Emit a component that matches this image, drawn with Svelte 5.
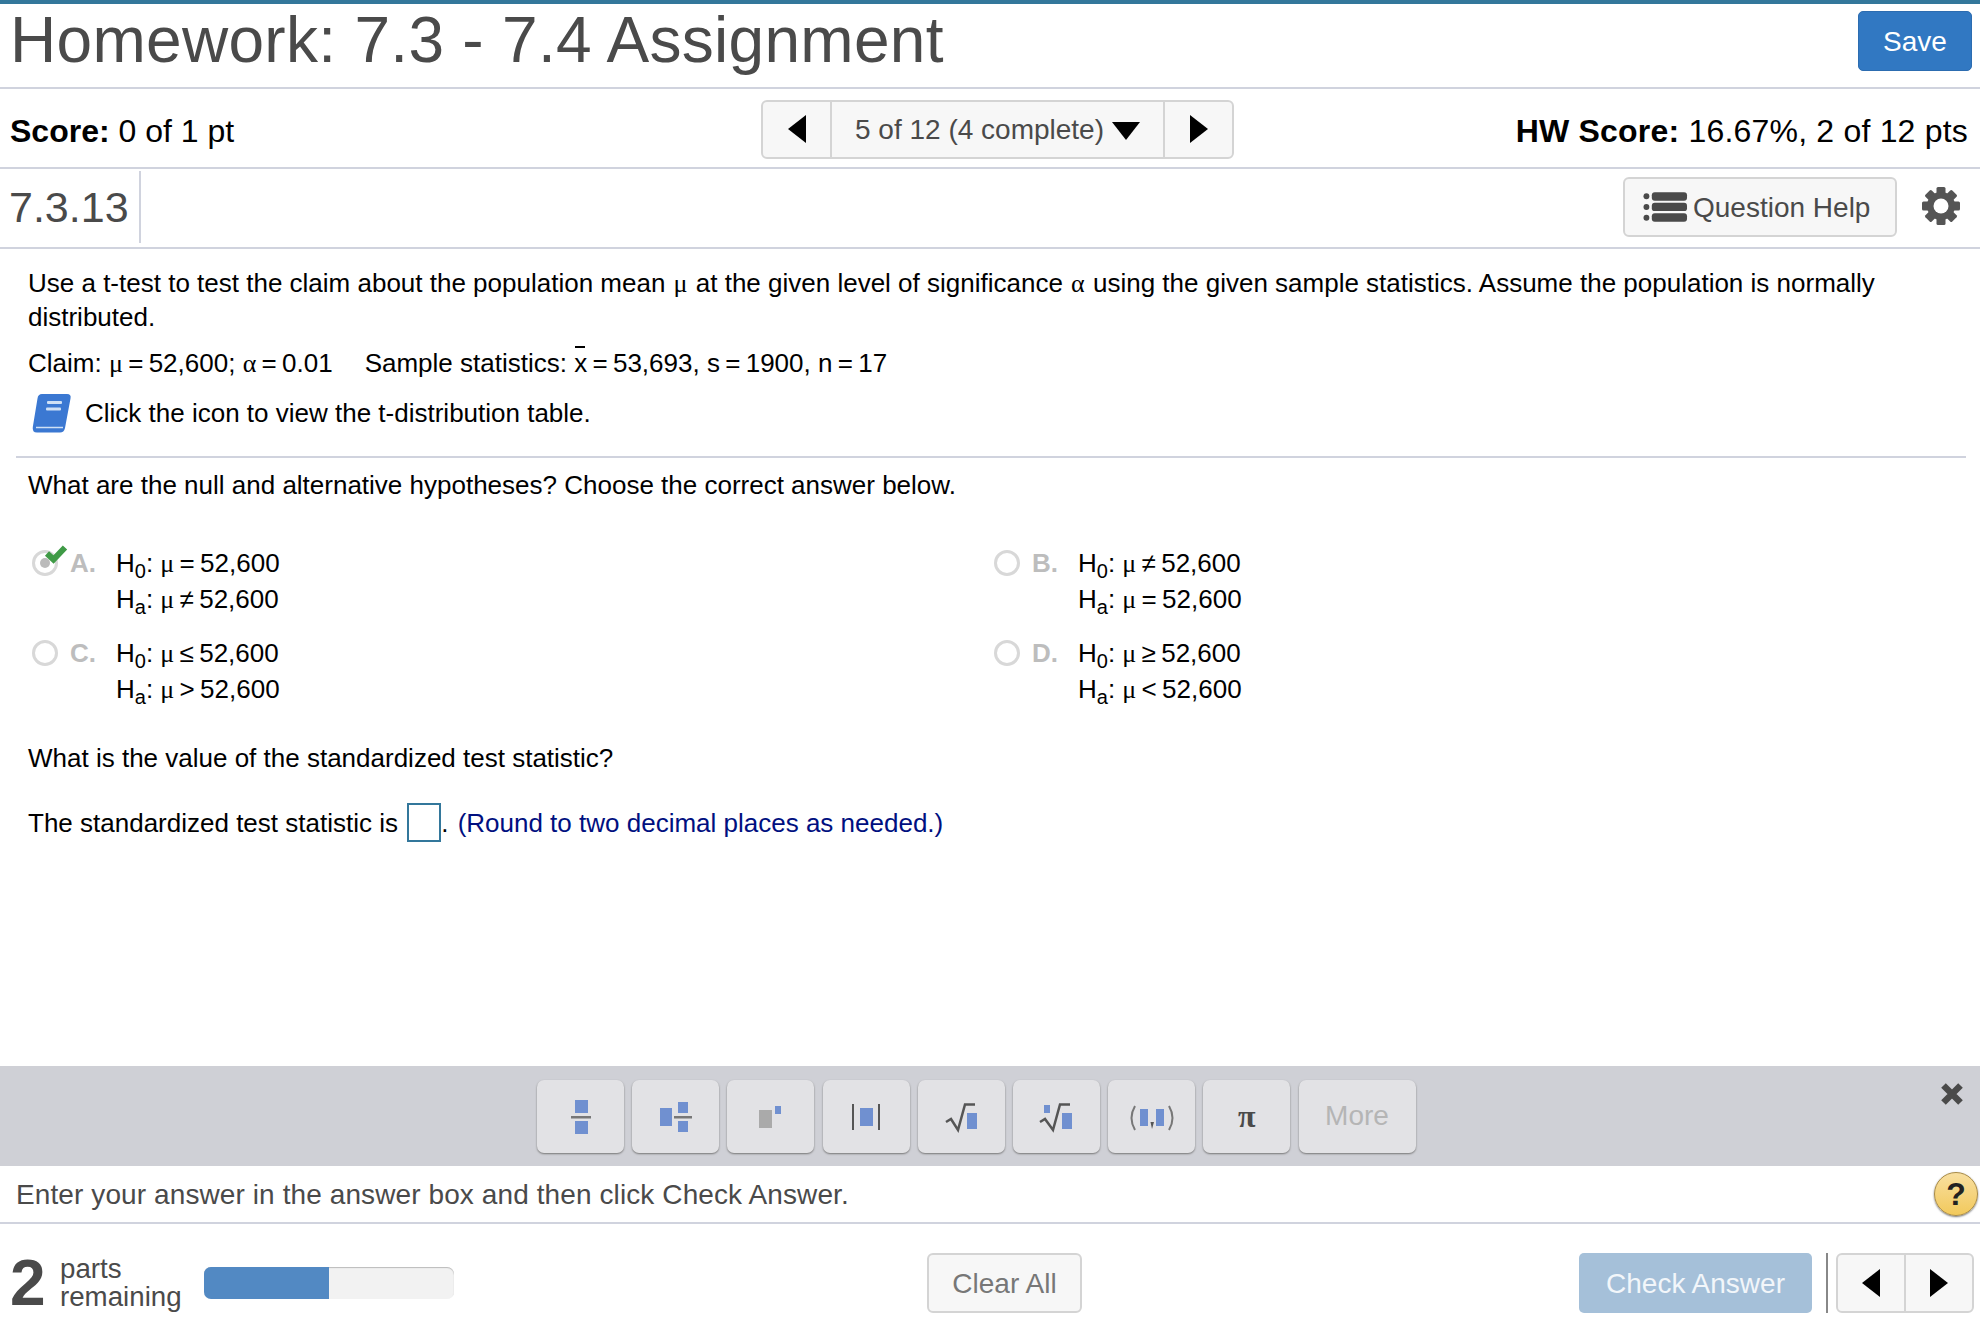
<script>
  const options = [
    { key: 'A', h0: '=', ha: '≠', checked: true },
    { key: 'B', h0: '≠', ha: '=' },
    { key: 'C', h0: '≤', ha: '>' },
    { key: 'D', h0: '≥', ha: '<' },
  ];
  const progress = 50;
</script>

<div class="page">
  <header class="title-row">
    <h1>Homework: 7.3 - 7.4 Assignment</h1>
    <button class="save">Save</button>
  </header>

  <div class="score-row">
    <div class="score"><b>Score:</b> 0 of 1 pt</div>
    <div class="pager">
      <span class="pager-arrow"><i class="tri left"></i></span>
      <span class="pager-label">5 of 12 (4 complete) <i class="tri down"></i></span>
      <span class="pager-arrow"><i class="tri right"></i></span>
    </div>
    <div class="score"><b>HW Score:</b> 16.67%, 2 of 12 pts</div>
  </div>

  <div class="question-row">
    <div class="question-id">7.3.13</div>
    <button class="help-btn">
      <svg width="45" height="32" viewBox="0 0 46 32">
        <g fill="#4a4a4a">
          <circle cx="3.5" cy="5" r="3" />
          <circle cx="3.5" cy="16" r="3" />
          <circle cx="3.5" cy="27" r="3" />
          <rect x="9" y="1" width="36" height="8.5" rx="3" />
          <rect x="9" y="11.7" width="36" height="8.5" rx="3" />
          <rect x="9" y="22.5" width="36" height="8.5" rx="3" />
        </g>
      </svg>
      <span class="help-label">Question Help</span>
    </button>
    <svg class="gear" width="40" height="40" viewBox="0 0 40 40">
      <g fill="#555">
        <rect x="15.5" y="1" width="9" height="38" rx="1.5" />
        <rect x="15.5" y="1" width="9" height="38" rx="1.5" transform="rotate(45 20 20)" />
        <rect x="15.5" y="1" width="9" height="38" rx="1.5" transform="rotate(90 20 20)" />
        <rect x="15.5" y="1" width="9" height="38" rx="1.5" transform="rotate(135 20 20)" />
      </g>
      <circle cx="20" cy="20" r="14" fill="#555" />
      <circle cx="20" cy="20" r="7.5" fill="#fff" />
    </svg>
  </div>

  <main class="content">
    <p class="line intro">
      Use a t-test to test the claim about the population mean <span class="gr">μ</span> at the given level of significance <span class="gr">α</span> using the given sample statistics. Assume the population is normally distributed.
    </p>
    <p class="line claim">
      Claim: <span class="gr">μ</span><span class="op">=</span>52,600; <span class="gr">α</span><span class="op">=</span>0.01<span class="tab"></span>Sample statistics: <span class="xbar">x</span><span class="op">=</span>53,693, s<span class="op">=</span>1900, n<span class="op">=</span>17
    </p>
    <div class="line book-row">
      <svg width="40" height="40" viewBox="0 0 40 40">
        <path d="M10 1H35Q39.500 1 38.500 5.500L33 35Q32 39.500 28 39.500H5Q0 39.500 .8 34L5.500 5.500Q6 1 10 1Z" fill="#3b78d2" />
        <path d="M4 34.500H31" stroke="#cfe0f5" stroke-width="1.500" />
        <rect x="15" y="8" width="15" height="3" rx="1" fill="#cfe0f5" />
        <rect x="14" y="14.500" width="15" height="3" rx="1" fill="#cfe0f5" />
      </svg>
      <span>Click the icon to view the t-distribution table.</span>
    </div>
    <hr />
    <p class="line">What are the null and alternative hypotheses? Choose the correct answer below.</p>

    <div class="options">
      {#each options as opt}
        <div class="option">
          <span class="radio" class:on={opt.checked}>
            {#if opt.checked}
              <svg class="check" width="24" height="20" viewBox="0 0 24 20">
                <path d="M3 9.500L9.500 15.500L21 3.500" fill="none" stroke="#3f9a46" stroke-width="6" />
              </svg>
            {/if}
          </span>
          <span class="opt-key">{opt.key}.</span>
          <div class="hyp">
            <div>H<sub>0</sub>: <span class="gr">μ</span><span class="op">{opt.h0}</span>52,600</div>
            <div>H<sub>a</sub>: <span class="gr">μ</span><span class="op">{opt.ha}</span>52,600</div>
          </div>
        </div>
      {/each}
    </div>

    <p class="line ask">What is the value of the standardized test statistic?</p>
    <p class="line answer">
      The standardized test statistic is <span class="answer-box"></span>. <span class="note">(Round to two decimal places as needed.)</span>
    </p>
  </main>

  <div class="toolbar">
    <button class="tool">
      <svg width="87" height="73" viewBox="0 0 87 73">
        <rect class="b" x="38" y="20" width="13" height="13" />
        <rect class="g" x="34" y="36" width="20" height="2.500" />
        <rect class="b" x="38" y="41" width="13" height="13" />
      </svg>
    </button>
    <button class="tool">
      <svg width="87" height="73" viewBox="0 0 87 73">
        <rect class="b" x="28" y="28" width="12" height="18" />
        <rect class="b" x="46" y="22" width="10" height="11" />
        <rect class="g" x="42" y="36" width="18" height="2.500" />
        <rect class="b" x="46" y="41" width="10" height="11" />
      </svg>
    </button>
    <button class="tool">
      <svg width="87" height="73" viewBox="0 0 87 73">
        <rect x="32" y="30" width="13" height="18" fill="#aaa" />
        <rect class="b" x="48" y="26" width="6" height="8" />
      </svg>
    </button>
    <button class="tool">
      <svg width="87" height="73" viewBox="0 0 87 73">
        <rect class="d" x="29" y="24" width="2" height="26" />
        <rect class="b" x="37" y="28" width="13" height="18" />
        <rect class="d" x="55" y="24" width="2" height="26" />
      </svg>
    </button>
    <button class="tool">
      <svg width="87" height="73" viewBox="0 0 87 73">
        <path class="rad" d="M28 42L33 39L40 50L47 24.500H57" />
        <rect class="b" x="49" y="33" width="10" height="16" />
      </svg>
    </button>
    <button class="tool">
      <svg width="87" height="73" viewBox="0 0 87 73">
        <rect class="b" x="31" y="25" width="6" height="8" />
        <path class="rad" d="M27 42L32 39L40 50L47 24.500H57" />
        <rect class="b" x="49" y="33" width="10" height="16" />
      </svg>
    </button>
    <button class="tool">
      <svg width="87" height="73" viewBox="0 0 87 73">
        <path d="M27 26Q20 38 27 50M61 26Q68 38 61 50" fill="none" stroke="#777" stroke-width="2" />
        <rect class="b" x="32" y="29" width="8" height="17" />
        <path d="M42.500 42H46L44 49Z" fill="#555" />
        <rect class="b" x="48" y="29" width="8" height="17" />
      </svg>
    </button>
    <button class="tool pi">π</button>
    <button class="tool more">More</button>
    <svg class="close" width="24" height="24" viewBox="0 0 24 24">
      <path d="M3.500 3.500L20.500 20.500M20.500 3.500L3.500 20.500" stroke="#4a4a4a" stroke-width="6.500" />
    </svg>
  </div>

  <div class="hint">
    <span class="hint-text">Enter your answer in the answer box and then click Check Answer.</span>
    <span class="hint-help">?</span>
  </div>

  <footer class="footer">
    <div class="parts">
      <span class="parts-num">2</span>
      <span class="parts-text">parts<br />remaining</span>
      <div class="bar"><div class="bar-fill" style="width:{progress}%"></div></div>
    </div>
    <button class="clear">Clear All</button>
    <div class="actions">
      <button class="check-answer">Check Answer</button>
      <span class="sep"></span>
      <div class="mini-nav">
        <span><i class="tri left"></i></span>
        <span><i class="tri right"></i></span>
      </div>
    </div>
  </footer>
</div>

<style>
  :global(body) {
    margin: 0;
    background: #fff;
  }
  .page {
    width: 1980px;
    height: 1328px;
    display: flex;
    flex-direction: column;
    box-sizing: border-box;
    border-top: 4px solid #33779b;
    font-family: 'Liberation Sans', Arial, sans-serif;
    color: #000;
    overflow: hidden;
  }
  button {
    font-family: inherit;
    margin: 0;
    padding: 0;
  }

  .title-row {
    height: 85px;
    flex: none;
    display: flex;
    justify-content: space-between;
    align-items: flex-start;
    padding: 3px 8px 0 10px;
    box-sizing: border-box;
    border-bottom: 2px solid #d0d3de;
  }
  h1 {
    margin: 0;
    font-size: 64px;
    font-weight: 400;
    line-height: 66px;
    letter-spacing: 0.3px;
    color: #4a4a4a;
  }
  .save {
    width: 114px;
    height: 60px;
    margin-top: 4px;
    padding-top: 2px;
    background: #3178c2;
    border: 1px solid #2c6cb0;
    border-radius: 5px;
    color: #fff;
    font-size: 28px;
  }

  .score-row {
    height: 80px;
    flex: none;
    display: grid;
    grid-template-columns: 751px 473px 1fr;
    align-items: center;
    padding: 0 12px 0 10px;
    box-sizing: border-box;
    border-bottom: 2px solid #d0d3de;
  }
  .score {
    font-size: 32px;
    padding-top: 6px;
  }
  .score:last-child {
    text-align: right;
    letter-spacing: 0.2px;
  }
  .pager {
    height: 59px;
    display: flex;
    box-sizing: border-box;
    border: 2px solid #d4d4d4;
    border-radius: 6px;
    background: #f7f7f7;
    margin-top: 2px;
  }
  .pager-arrow {
    width: 67px;
    display: flex;
    align-items: center;
    justify-content: center;
  }
  .pager-label {
    flex: 1;
    border-left: 2px solid #d4d4d4;
    border-right: 2px solid #d4d4d4;
    display: flex;
    align-items: center;
    padding: 2px 0 0 23px;
    gap: 8px;
    font-size: 28px;
    color: #4a4a4a;
  }
  .pager-label .tri {
    margin-top: 2px;
  }
  .tri {
    display: block;
    width: 0;
    height: 0;
    border-style: solid;
    border-color: transparent;
  }
  .tri.left {
    border-width: 14px 18px 14px 0;
    border-right-color: #000;
  }
  .tri.right {
    border-width: 14px 0 14px 18px;
    border-left-color: #000;
  }
  .tri.down {
    border-width: 18px 14px 0 14px;
    border-top-color: #000;
  }

  .question-row {
    height: 80px;
    flex: none;
    display: flex;
    align-items: center;
    padding-right: 19px;
    box-sizing: border-box;
    border-bottom: 2px solid #d0d3de;
  }
  .question-id {
    width: 132px;
    height: 72px;
    margin-left: 9px;
    border-right: 2px solid #d0d3de;
    box-sizing: border-box;
    font-size: 43px;
    line-height: 72px;
    color: #4a4a4a;
    margin-top: -2px;
  }
  .help-btn {
    margin-left: auto;
    width: 274px;
    height: 60px;
    margin-top: -2px;
    display: flex;
    align-items: center;
    gap: 5px;
    padding-left: 18px;
    box-sizing: border-box;
    background: #f7f7f7;
    border: 2px solid #d4d4d4;
    border-radius: 6px;
    font-size: 28px;
    color: #4a4a4a;
  }
  .help-label {
    padding-top: 2px;
  }
  .gear {
    margin-left: 24px;
    margin-top: -4px;
  }

  .content {
    flex: 1;
    min-height: 0;
    padding: 18px 14px 0 28px;
    font-size: 26px;
  }
  .line {
    margin: 0;
    line-height: 34px;
  }
  .intro {
    line-height: 33.500px;
  }
  .intro .gr {
    margin: 0 1px;
  }
  .gr {
    font-family: 'Liberation Serif', 'Times New Roman', serif;
  }
  .op {
    margin: 0 5.300px;
  }
  .claim {
    margin-top: 12px;
  }
  .tab {
    display: inline-block;
    width: 32px;
  }
  .xbar {
    position: relative;
    display: inline-block;
  }
  .xbar::before {
    content: '';
    position: absolute;
    left: 1px;
    right: 2px;
    top: 0;
    height: 2px;
    background: #000;
  }
  .book-row {
    margin-top: 12px;
    height: 40px;
    display: flex;
    align-items: center;
    gap: 13px;
    margin-left: 4px;
  }
  hr {
    border: 0;
    height: 2px;
    background: #d0d3de;
    margin: 23px 0 10px -12px;
  }
  .options {
    margin-top: 43px;
    display: grid;
    grid-template-columns: 962px 1fr;
    row-gap: 18px;
  }
  .option {
    display: flex;
    position: relative;
    line-height: 36px;
  }
  .hyp div {
    height: 36px;
  }
  .radio {
    width: 26px;
    height: 26px;
    margin: 5px 0 0 4px;
    box-sizing: border-box;
    border: 3px solid #d8d8d8;
    border-radius: 50%;
    position: relative;
    background: #fff;
    flex: none;
  }
  .radio.on::after {
    content: '';
    position: absolute;
    left: 5px;
    top: 5px;
    width: 10px;
    height: 10px;
    border-radius: 50%;
    background: #bbb;
  }
  .check {
    position: absolute;
    left: 9px;
    top: -9px;
    z-index: 1;
  }
  .opt-key {
    width: 46px;
    margin-left: 12px;
    font-weight: 700;
    font-size: 26px;
    color: #bdbdbd;
    flex: none;
  }
  sub {
    font-size: 20px;
    line-height: 0;
  }
  .ask {
    margin-top: 34px;
  }
  .answer {
    margin-top: 28px;
    display: flex;
    align-items: center;
    white-space: pre-wrap;
  }
  .answer-box {
    display: inline-block;
    width: 34px;
    height: 39px;
    box-sizing: border-box;
    border: 2px solid #33779b;
    background: #fff;
    margin-left: 2px;
  }
  .note {
    color: #000f80;
    margin-left: 2px;
  }

  .toolbar {
    height: 100px;
    flex: none;
    display: flex;
    align-items: center;
    gap: 8.200px;
    padding-left: 537px;
    box-sizing: border-box;
    background: #cfd0d6;
  }
  .tool {
    width: 87px;
    height: 73px;
    flex: none;
    border: 0;
    border-radius: 7px;
    background: #e2e2e5;
    box-shadow: 0 1px 2px #777;
    font-size: 28px;
    color: #b5b5b5;
  }
  .tool svg {
    display: block;
  }
  .tool.pi {
    font-family: 'Liberation Serif', serif;
    font-weight: 700;
    font-size: 32px;
    color: #4a4a4a;
  }
  .tool.more {
    width: 117px;
  }
  .b {
    fill: #7090d0;
  }
  .g {
    fill: #777;
  }
  .d {
    fill: #555;
  }
  .rad {
    fill: none;
    stroke: #555;
    stroke-width: 2.500;
  }
  .close {
    margin-left: auto;
    margin-right: 16px;
    align-self: flex-start;
    margin-top: 16px;
  }

  .hint {
    height: 58px;
    flex: none;
    display: flex;
    align-items: center;
    justify-content: space-between;
    padding: 0 2px 0 16px;
    box-sizing: border-box;
    border-bottom: 2px solid #d0d3de;
    font-size: 28px;
    letter-spacing: 0.1px;
    color: #4a4a4a;
  }
  .hint-text {
    padding-top: 2px;
  }
  .hint-help {
    width: 44px;
    height: 44px;
    box-sizing: border-box;
    border: 1px solid #a88a45;
    border-radius: 50%;
    background: linear-gradient(#f8dfa0, #f2c95c);
    box-shadow: 0 1px 2px #777;
    font-weight: 700;
    font-size: 32px;
    line-height: 42px;
    text-align: center;
    color: #222;
  }

  .footer {
    height: 104px;
    flex: none;
    display: grid;
    grid-template-columns: 927px 155px 1fr;
    align-items: center;
    padding: 29px 6px 15px 0;
    box-sizing: border-box;
  }
  .parts {
    display: flex;
    align-items: center;
    padding-left: 10px;
    color: #4a4a4a;
  }
  .parts-num {
    font-size: 64px;
    font-weight: 700;
    line-height: 60px;
    width: 50px;
  }
  .parts-text {
    font-size: 27.700px;
    line-height: 28px;
    width: 144px;
  }
  .bar {
    width: 250px;
    height: 32px;
    box-sizing: border-box;
    background: #f2f2f2;
    border-radius: 7px;
    box-shadow: inset 0 1px 1px #bbb;
    overflow: hidden;
  }
  .bar-fill {
    height: 100%;
    background: #5289c3;
  }
  .clear {
    height: 60px;
    padding-top: 2px;
    background: #f7f7f7;
    border: 2px solid #d4d4d4;
    border-radius: 6px;
    font-size: 28px;
    color: #777;
  }
  .actions {
    display: flex;
    justify-content: flex-end;
    align-items: stretch;
    height: 60px;
  }
  .check-answer {
    width: 233px;
    padding-top: 2px;
    border: 0;
    border-radius: 5px;
    background: #a5c0d9;
    color: #f2f6fa;
    font-size: 28px;
  }
  .sep {
    width: 2px;
    margin: 0 8px 0 14px;
    background: #888;
  }
  .mini-nav {
    width: 138px;
    display: flex;
    box-sizing: border-box;
    border: 2px solid #d4d4d4;
    border-radius: 6px;
    background: #f7f7f7;
  }
  .mini-nav span {
    flex: 1;
    display: flex;
    align-items: center;
    justify-content: center;
  }
  .mini-nav span + span {
    border-left: 2px solid #d4d4d4;
  }
</style>
